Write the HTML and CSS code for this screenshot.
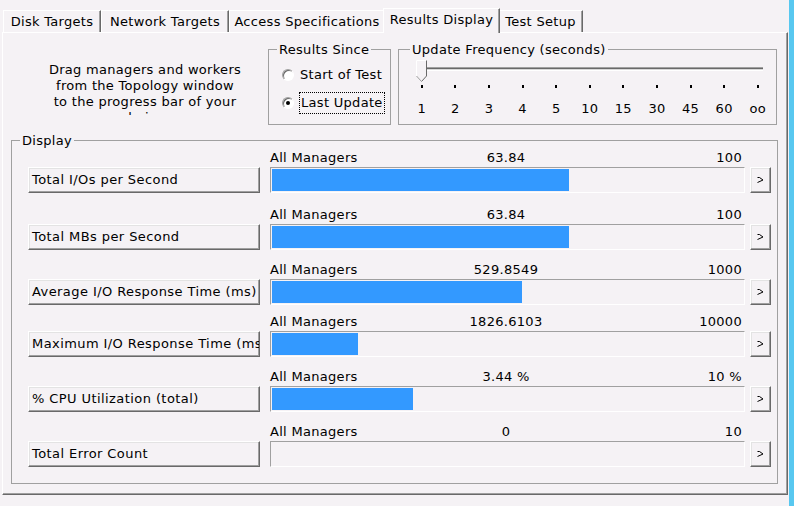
FILE: index.html
```html
<!DOCTYPE html>
<html lang="en">
<head>
  <meta charset="UTF-8">
  <title>Results Display</title>
  <link rel="stylesheet" href="styles.css">
</head>
<body>
  <div class="window">
    <div class="app">
      <div class="tabs">
        <div class="tab tab-disk">Disk Targets</div>
        <div class="tab tab-net">Network Targets</div>
        <div class="tab tab-access">Access Specifications</div>
        <div class="tab tab-active">Results Display</div>
        <div class="tab tab-setup">Test Setup</div>
      </div>
      <div class="panel">
        <div class="top">
          <div class="hint">
            <p>Drag managers and workers<br>from the Topology window<br>to the progress bar of your<br>choice.</p>
          </div>
          <fieldset class="group since">
            <legend>Results Since</legend>
            <label class="option"><span class="radio"></span><span>Start of Test</span></label>
            <label class="option"><span class="radio radio-on"></span><span class="focus">Last Update</span></label>
          </fieldset>
          <fieldset class="group freq">
            <legend>Update Frequency (seconds)</legend>
            <div class="slider">
              <div class="track"></div>
              <svg class="thumb" width="12" height="23" viewBox="0 0 12 23">
                <polygon points="0.5,0.5 10.5,0.5 10.5,16 5.5,21.5 0.5,16" fill="#f5f2f5"/>
                <polyline points="0.5,16 0.5,0.5 10.5,0.5" fill="none" stroke="#fff"/>
                <polyline points="10.5,0.5 10.5,16 5.5,21.5" fill="none" stroke="#696969"/>
                <line x1="0.5" y1="16" x2="5.5" y2="21.5" stroke="#a0a0a0"/>
              </svg>
            </div>
            <div class="scale">
              <span class="step">1</span>
              <span class="step">2</span>
              <span class="step">3</span>
              <span class="step">4</span>
              <span class="step">5</span>
              <span class="step">10</span>
              <span class="step">15</span>
              <span class="step">30</span>
              <span class="step">45</span>
              <span class="step">60</span>
              <span class="step">oo</span>
            </div>
          </fieldset>
        </div>

        <fieldset class="group display">
          <legend>Display</legend>
          <div class="rows">
            <div class="row">
              <div class="btn name">Total I/Os per Second</div>
              <div class="meter">
                <div class="meter-head"><span>All Managers</span><span>63.84</span><span>100</span></div>
                <div class="bar"><div class="fill" style="width:63.1%"></div></div>
              </div>
              <div class="btn more"><svg width="7" height="6" viewBox="0 0 7 6"><path d="M0.5 0.5H2.5L6 3L0.5 5.5" fill="none" stroke="#000"/></svg></div>
            </div>
            <div class="row row-down">
              <div class="btn name">Total MBs per Second</div>
              <div class="meter">
                <div class="meter-head"><span>All Managers</span><span>63.84</span><span>100</span></div>
                <div class="bar"><div class="fill" style="width:63.1%"></div></div>
              </div>
              <div class="btn more"><svg width="7" height="6" viewBox="0 0 7 6"><path d="M0.5 0.5H2.5L6 3L0.5 5.5" fill="none" stroke="#000"/></svg></div>
            </div>
            <div class="row">
              <div class="btn name">Average I/O Response Time (ms)</div>
              <div class="meter">
                <div class="meter-head"><span>All Managers</span><span>529.8549</span><span>1000</span></div>
                <div class="bar"><div class="fill" style="width:52.99%"></div></div>
              </div>
              <div class="btn more"><svg width="7" height="6" viewBox="0 0 7 6"><path d="M0.5 0.5H2.5L6 3L0.5 5.5" fill="none" stroke="#000"/></svg></div>
            </div>
            <div class="row row-up">
              <div class="btn name">Maximum I/O Response Time (ms)</div>
              <div class="meter">
                <div class="meter-head"><span>All Managers</span><span>1826.6103</span><span>10000</span></div>
                <div class="bar"><div class="fill" style="width:18.27%"></div></div>
              </div>
              <div class="btn more"><svg width="7" height="6" viewBox="0 0 7 6"><path d="M0.5 0.5H2.5L6 3L0.5 5.5" fill="none" stroke="#000"/></svg></div>
            </div>
            <div class="row">
              <div class="btn name">% CPU Utilization (total)</div>
              <div class="meter">
                <div class="meter-head"><span>All Managers</span><span>3.44 %</span><span>10 %</span></div>
                <div class="bar"><div class="fill" style="width:30%"></div></div>
              </div>
              <div class="btn more"><svg width="7" height="6" viewBox="0 0 7 6"><path d="M0.5 0.5H2.5L6 3L0.5 5.5" fill="none" stroke="#000"/></svg></div>
            </div>
            <div class="row">
              <div class="btn name">Total Error Count</div>
              <div class="meter">
                <div class="meter-head"><span>All Managers</span><span>0</span><span>10</span></div>
                <div class="bar"><div class="fill" style="width:0%"></div></div>
              </div>
              <div class="btn more"><svg width="7" height="6" viewBox="0 0 7 6"><path d="M0.5 0.5H2.5L6 3L0.5 5.5" fill="none" stroke="#000"/></svg></div>
            </div>
          </div>
        </fieldset>
      </div>
    </div>
    <div class="strip"></div>
  </div>
</body>
</html>
```

FILE: styles.css
```css
/* Results Display tab, classic dialog look */
:root {
  --face:    #f5f2f5;
  --light:   #ffffff;
  --shadow:  #a0a0a0;
  --dark:    #696969;
  --fill:    #3399ff;
}

html, body {
  margin: 0;
  height: 506px;
  overflow: hidden;
}
body {
  background: var(--face);
  color: #000;
  font: 13px/16px "DejaVu Sans", sans-serif;
  letter-spacing: 0.3px;
}

.window {
  display: flex;
  height: 506px;
}
.app {
  width: 789px;
}
.strip {
  width: 5px;
  background: #58c8f0;
}

/* tab strip */
.tabs {
  display: flex;
  align-items: flex-end;
  height: 32px;
  padding-left: 3px;
  box-sizing: border-box;
  position: relative;
  z-index: 1;
}
.tab {
  box-sizing: border-box;
  height: 22px;
  padding-top: 3px;
  text-align: center;
  white-space: nowrap;
  border-top: 1px solid var(--light);
  border-left: 1px solid var(--light);
  border-right: 1px solid var(--dark);
  box-shadow: inset -1px 0 var(--shadow);
  background: var(--face);
}
.tab-disk   { width: 98px; }
.tab-net    { width: 128px; }
.tab-access { width: 156px; }
.tab-setup  { width: 85px; }
.tab-active {
  width: 117px;
  height: 25px;
  padding-top: 3px;
  margin: 0 -2px -1px;
  position: relative;
  z-index: 2;
}

/* tab page */
.panel {
  width: 786px;
  height: 463px;
  margin-left: 2px;
  box-sizing: border-box;
  border: 1px solid;
  border-color: var(--light) var(--dark) var(--dark) var(--light);
  box-shadow: inset -1px -1px var(--shadow);
}

.top {
  display: flex;
  height: 83px;
  margin-top: 9px;
}
.hint {
  width: 240px;
  height: 53px;
  margin: 20px 0 0 22px;
  overflow: hidden;
  text-align: center;
}
.hint p {
  margin: 0;
}

/* group boxes */
.group {
  margin: 0;
  padding: 0;
  min-width: 0;
  box-sizing: border-box;
  border: 1px solid var(--shadow);
}
.group legend {
  padding: 0 2px;
  margin-left: 8px;
  line-height: 15px;
}
.since {
  width: 123px;
  margin-left: 3px;
}
.freq {
  width: 379px;
  margin-left: 7px;
}
.freq legend {
  margin-left: 11px;
}

.option {
  display: flex;
  align-items: center;
  gap: 6px;
  height: 16px;
  margin: 10px 0 0 13px;
}
.option + .option {
  margin-top: 12px;
}
.radio {
  flex: none;
  position: relative;
  width: 12px;
  height: 12px;
  box-sizing: border-box;
  border-radius: 50%;
  border: 1px solid;
  border-color: var(--shadow) var(--light) var(--light) var(--shadow);
  background: #fff;
  box-shadow: inset 1px 1px var(--dark);
}
.radio-on::after {
  content: "";
  position: absolute;
  left: 3px;
  top: 3px;
  width: 4px;
  height: 4px;
  border-radius: 50%;
  background: #000;
}
.focus {
  padding: 2px 1px;
  outline: 1px dotted #000;
}

/* slider */
.slider {
  position: relative;
  height: 25px;
  margin: 3px 13px 0 17px;
}
.track {
  position: absolute;
  left: 3px;
  right: 0;
  top: 7px;
  height: 4px;
  background: linear-gradient(var(--shadow) 0 1px, var(--dark) 1px 2px, #d8d8d8 2px 3px, #fff 3px);
}
.thumb {
  position: absolute;
  left: 0;
  top: 0;
}
.scale {
  display: grid;
  grid-template-columns: repeat(11, 33.6px);
  margin-left: 6px;
}
.step {
  display: flex;
  flex-direction: column;
  align-items: center;
}
.step::before {
  content: "";
  width: 2px;
  height: 3px;
  margin-bottom: 13px;
  background: #000;
}

/* display rows */
.display {
  width: 767px;
  height: 351px;
  margin: 8px 0 0 8px;
}
.rows {
  display: flex;
  flex-direction: column;
  gap: 12px;
  padding: 2px 0 0 16px;
}
.row {
  display: flex;
  align-items: flex-end;
}
.row-down {
  margin-top: 2px;
}
.row-up {
  margin-top: -3px;
}
.btn {
  box-sizing: border-box;
  height: 26px;
  border: 1px solid;
  border-color: var(--light) var(--dark) var(--dark) var(--light);
  box-shadow: inset -1px -1px var(--shadow), inset 1px 1px #e3e3e3;
  background: var(--face);
}
.name {
  width: 232px;
  padding-left: 3px;
  line-height: 23px;
  letter-spacing: 0.42px;
  white-space: nowrap;
  overflow: hidden;
}
.more {
  width: 21px;
  margin-left: 5px;
  display: flex;
  align-items: center;
  justify-content: center;
}
.meter {
  width: 475px;
  margin-left: 10px;
}
.meter-head {
  display: grid;
  grid-template-columns: 1fr auto 1fr;
  height: 16px;
  margin-bottom: 1px;
  padding-right: 3px;
  white-space: nowrap;
}
.meter-head span:last-child {
  text-align: right;
}
.bar {
  height: 26px;
  box-sizing: border-box;
  padding: 1px;
  border: 1px solid;
  border-color: var(--shadow) var(--light) var(--light) var(--shadow);
}
.fill {
  height: 100%;
  background: var(--fill);
}
```
